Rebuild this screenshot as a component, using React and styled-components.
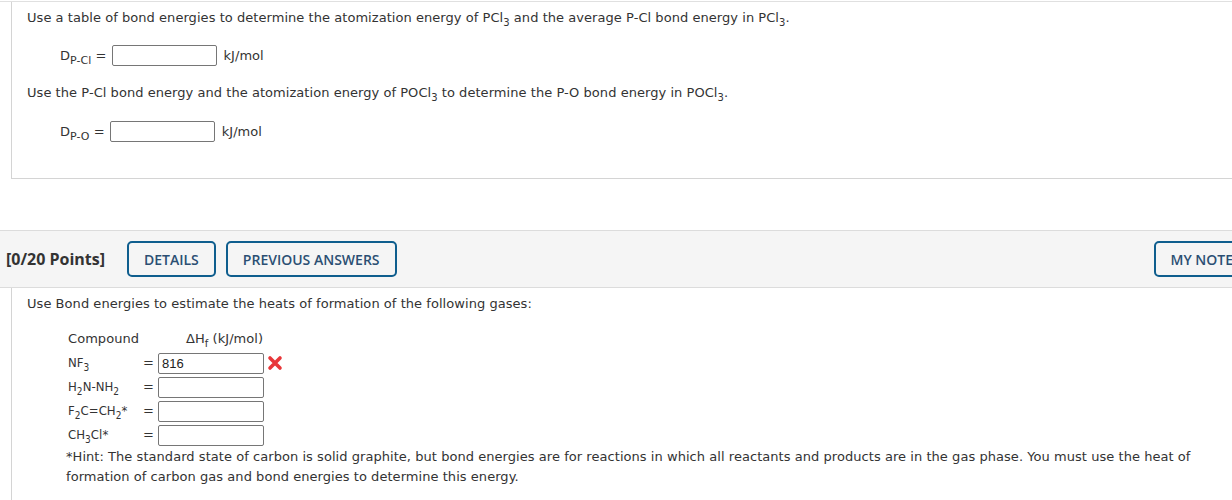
import styled, { createGlobalStyle } from "styled-components";

const Global = createGlobalStyle`
  body {
    margin: 0;
    background: #fff;
    font-family: "DejaVu Sans", Verdana, sans-serif;
    font-size: 13px;
    color: #333;
  }
`;

const Page = styled.div`
  width: 1232px;
  height: 500px;
  overflow: hidden;
`;

const QuestionTop = styled.div`
  margin-top: 1px;
  border-top: 1px solid #e0e0e0;
`;

const Body = styled.div`
  margin-left: 11px;
  border-left: 1px solid #d4d4d4;
  border-bottom: ${(p) => (p.$bottom ? "1px solid #d4d4d4" : "none")};
  padding: ${(p) => p.$pad || "0 0 0 15px"};
  height: ${(p) => p.$height || "auto"};
  box-sizing: border-box;
  letter-spacing: 0.05px;
`;

const Para = styled.div`
  line-height: 16px;
  margin-top: ${(p) => p.$top || 0}px;
  white-space: nowrap;
`;

const Sub = styled.sub`
  font-size: ${(p) => p.$size || 10}px;
  vertical-align: -4px;
  line-height: 0;
`;

const AnswerRow = styled.div`
  display: flex;
  align-items: center;
  gap: 5px;
  margin-top: ${(p) => p.$top || 0}px;
  margin-left: ${(p) => p.$indent || 33}px;
  height: 21px;
`;

const Label = styled.span`
  line-height: 16px;
  white-space: nowrap;
  flex-shrink: 0;
`;

const Unit = styled.span`
  line-height: 16px;
  white-space: nowrap;
  margin-left: 2px;
`;

const Input = styled.div`
  width: ${(p) => p.$w || 104}px;
  flex-shrink: 0;
  height: 21px;
  box-sizing: border-box;
  border: 1px solid #767676;
  border-radius: 2px;
  background: #fff;
  font-family: "Liberation Sans", Arial, sans-serif;
  font-size: 13px;
  color: #222;
  padding-left: 3px;
  line-height: 19px;
  letter-spacing: 0;
`;

const Gap = styled.div`
  height: 51px;
`;

const Header = styled.div`
  height: 58px;
  box-sizing: border-box;
  border-top: 1px solid #dcdcdc;
  border-bottom: 1px solid #dcdcdc;
  background: #f5f5f5;
  display: flex;
  align-items: center;
  padding-left: 6px;
  font-family: "Open Sans", sans-serif;
  white-space: nowrap;
`;

const Points = styled.span`
  font-weight: 700;
  font-size: 16px;
  color: #333;
  width: 121px;
  flex-shrink: 0;
`;

const Button = styled.div`
  height: 36px;
  box-sizing: border-box;
  border: 2px solid #0f5e8e;
  border-radius: 5px;
  padding: 0 15px;
  display: flex;
  align-items: center;
  font-size: 14px;
  font-weight: 600;
  color: #2b4f73;
  margin-left: ${(p) => p.$ml || 0}px;
  flex-shrink: 0;
`;

const Grid = styled.div`
  display: grid;
  grid-template-columns: 75px 15px 106px 22px;
  grid-auto-rows: 24px;
  align-items: center;
  margin-left: 41px;
  margin-top: 15px;
`;

const Cell = styled.div`
  line-height: 16px;
  white-space: nowrap;
  font-family: ${(p) => (p.$narrow ? '"DejaVu Sans Condensed", "DejaVu Sans", sans-serif' : "inherit")};
  grid-column: ${(p) => p.$span || "auto"};
  padding-left: ${(p) => p.$pl || 0}px;
  display: ${(p) => (p.$flex ? "flex" : "block")};
`;

const Hint = styled.div`
  margin-left: 39px;
  margin-top: 0;
  line-height: 20px;
  width: 1140px;
`;

const XMark = () => (
  <svg width="16" height="16" viewBox="0 0 16 16">
    <path d="M3 3 L13 13 M13 3 L3 13" stroke="#e8373a" strokeWidth="3.6" strokeLinecap="round" />
  </svg>
);

const rows = [
  { label: <>NF<Sub>3</Sub></>, value: "816", wrong: true },
  { label: <>H<Sub>2</Sub>N-NH<Sub>2</Sub></> },
  { label: <>F<Sub>2</Sub>C=CH<Sub>2</Sub>*</> },
  { label: <>CH<Sub>3</Sub>Cl*</> },
];

function Row({ label, value, wrong }) {
  return (
    <>
      <Cell $narrow>{label}</Cell>
      <Cell>=</Cell>
      <Input $w={106}>{value}</Input>
      <Cell $pl={3} $flex>
        {wrong ? <XMark /> : null}
      </Cell>
    </>
  );
}

export default function App() {
  return (
    <Page>
      <Global />
      <QuestionTop>
        <Body $bottom $height="177px" $pad="8px 0 0 15px">
          <Para>
            Use a table of bond energies to determine the atomization energy of PCl<Sub>3</Sub> and the
            average P-Cl bond energy in PCl<Sub>3</Sub>.
          </Para>
          <AnswerRow $top={19}>
            <Label>
              D<Sub $size={11}>P-Cl</Sub> =
            </Label>
            <Input $w={105} />
            <Unit>kJ/mol</Unit>
          </AnswerRow>
          <Para $top={19}>
            Use the P-Cl bond energy and the atomization energy of POCl<Sub>3</Sub> to determine the P-O bond
            energy in POCl<Sub>3</Sub>.
          </Para>
          <AnswerRow $top={20}>
            <Label>
              D<Sub $size={11}>P-O</Sub> =
            </Label>
            <Input $w={105} />
            <Unit>kJ/mol</Unit>
          </AnswerRow>
        </Body>
      </QuestionTop>
      <Gap />
      <Header>
        <Points>[0/20 Points]</Points>
        <Button>DETAILS</Button>
        <Button $ml={10}>PREVIOUS ANSWERS</Button>
        <Button $ml={757}>MY NOTES</Button>
      </Header>
      <Body $pad="8px 0 0 15px" $height="212px">
        <Para>Use Bond energies to estimate the heats of formation of the following gases:</Para>
        <Grid>
          <Cell $span="1 / 3">Compound</Cell>
          <Cell $span="3 / 5" $pl={28}>
            ΔH<Sub>f</Sub> (kJ/mol)
          </Cell>
          {rows.map((r, i) => (
            <Row key={i} {...r} />
          ))}
        </Grid>
        <Hint>
          *Hint: The standard state of carbon is solid graphite, but bond energies are for reactions in which
          all reactants and products are in the gas phase. You must use the heat of formation of carbon gas and
          bond energies to determine this energy.
        </Hint>
      </Body>
    </Page>
  );
}
